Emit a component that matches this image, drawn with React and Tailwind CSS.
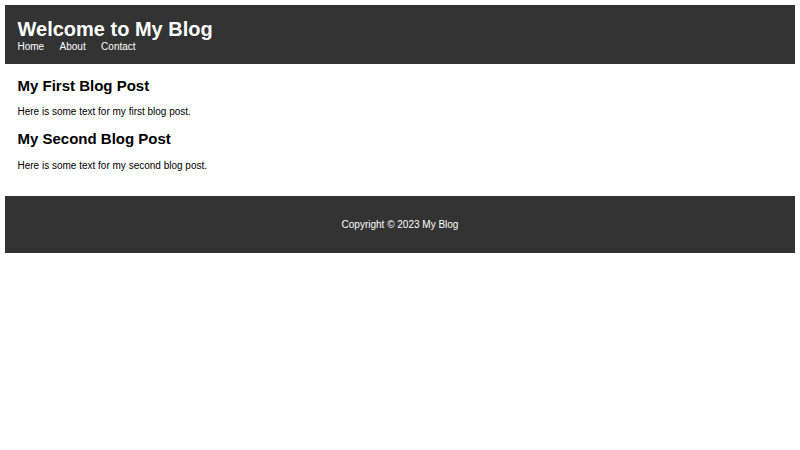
function App() {
  return (
    <div className="m-[5px] font-['Liberation_Sans',Arial,sans-serif] text-black">
      {/* Cabecera */}
      <header className="bg-[#333333] text-white px-[12.5px] pt-[12.5px] pb-[11.5px]">
        <h1 className="text-[20px] font-bold leading-[23px]">Welcome to My Blog</h1>
        <nav>
          <ul className="flex gap-[15.4px] text-[10px] leading-[11.5px]">
            <li>Home</li>
            <li>About</li>
            <li>Contact</li>
          </ul>
        </nav>
      </header>

      {/* Entradas */}
      <main className="px-[12.5px] pt-[13.2px] pb-[24.9px]">
        <article>
          <h2 className="text-[15px] font-bold leading-[17.25px]">My First Blog Post</h2>
          <p className="mt-[12.3px] text-[10px] leading-[11.5px]">
            Here is some text for my first blog post.
          </p>
        </article>
        <article className="mt-[12.3px]">
          <h2 className="text-[15px] font-bold leading-[17.25px]">My Second Blog Post</h2>
          <p className="mt-[12.5px] text-[10px] leading-[11.5px]">
            Here is some text for my second blog post.
          </p>
        </article>
      </main>

      {/* Pie */}
      <footer className="bg-[#333333] text-white text-center pt-[22.4px] pb-[22.7px]">
        <p className="text-[10px] leading-[11.5px]">Copyright © 2023 My Blog</p>
      </footer>
    </div>
  );
}

export default App;
